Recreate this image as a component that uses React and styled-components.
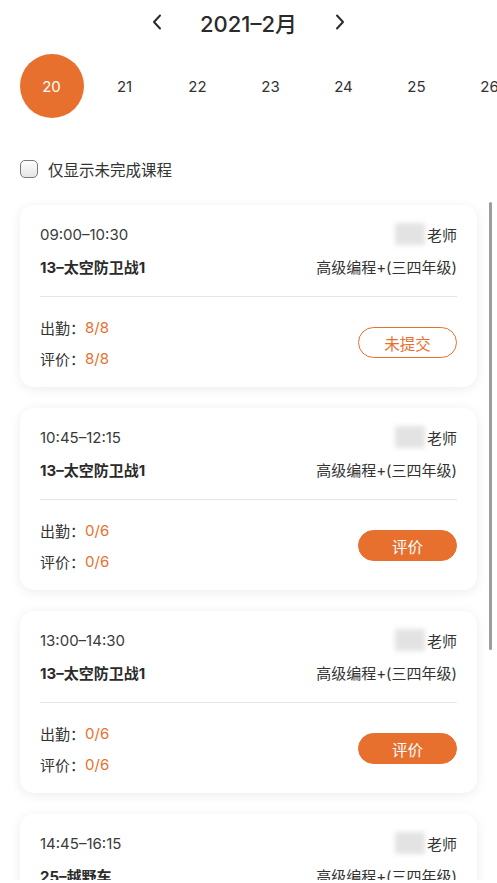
import styled, { createGlobalStyle } from 'styled-components';

const ORANGE = '#e8702f';

const GlobalStyle = createGlobalStyle`
  html, body {
    margin: 0;
    padding: 0;
    background: #ffffff;
    overflow: hidden;
  }
  * {
    box-sizing: border-box;
  }
  body {
    font-family: Inter, 'Noto Sans CJK SC', sans-serif;
    color: #333333;
  }
`;

const Page = styled.div`
  width: 497px;
  height: 883px;
  display: flex;
  flex-direction: column;
  overflow: hidden;
  background: #ffffff;
`;

const MonthBar = styled.div`
  height: 44px;
  display: flex;
  align-items: center;
  justify-content: center;
  gap: 36px;
`;

const Arrow = styled.button`
  border: none;
  background: none;
  padding: 0;
  width: 14px;
  height: 22px;
  display: flex;
  align-items: center;
  justify-content: center;
  cursor: pointer;
`;

const MonthTitle = styled.div`
  font-size: 22px;
  font-weight: 500;
  color: #2b2b2b;
`;

const DateRow = styled.div`
  display: flex;
  padding-left: 15px;
  margin-top: 10px;
  height: 64px;
  overflow: hidden;
`;

const DateItem = styled.div`
  flex: 0 0 73px;
  display: flex;
  align-items: center;
  justify-content: center;
`;

const DateNum = styled.div`
  width: 64px;
  height: 64px;
  border-radius: 50%;
  display: flex;
  align-items: center;
  justify-content: center;
  font-size: 15px;
  color: ${(p) => (p.$active ? '#ffffff' : '#333333')};
  background: ${(p) => (p.$active ? ORANGE : 'transparent')};
`;

const FilterRow = styled.label`
  display: flex;
  align-items: center;
  gap: 10px;
  margin: 39px 0 0 20px;
  height: 24px;
  font-size: 15.5px;
  color: #333333;
`;

const CheckBox = styled.span`
  width: 18px;
  height: 18px;
  border: 1.5px solid #7a7a7a;
  border-radius: 5px;
  background: linear-gradient(#ffffff, #e4e4e4);
`;

const ListWrap = styled.div`
  position: relative;
  height: 699px;
  overflow: hidden;
`;

const List = styled.div`
  display: flex;
  flex-direction: column;
  gap: 21px;
  padding: 24px 20px 20px 20px;
`;

const ScrollThumb = styled.div`
  position: absolute;
  right: 5px;
  top: 21px;
  width: 3px;
  height: 448px;
  border-radius: 2px;
  background: #9c9c9c;
`;

const Card = styled.div`
  background: #ffffff;
  border-radius: 14px;
  box-shadow: 0 2px 12px rgba(0, 0, 0, 0.08);
  padding: 18px 20px 18px 20px;
`;

const Row = styled.div`
  display: flex;
  align-items: center;
  justify-content: space-between;
  height: 22px;
  font-size: 15px;
  margin-top: ${(p) => p.$gap || 0}px;
`;

const Time = styled.span`
  color: #3a3a3a;
`;

const Title = styled.span`
  font-weight: 700;
  color: #2b2b2b;
`;

const Teacher = styled.span`
  display: flex;
  align-items: center;
  color: #333333;
`;

const BlurName = styled.span`
  display: inline-block;
  width: 30px;
  height: 22px;
  margin-right: 2px;
  background: #e3e3e3;
  filter: blur(2.5px);
`;

const Course = styled.span`
  color: #333333;
`;

const Divider = styled.div`
  height: 1px;
  background: #e6e6e6;
  margin: 19px 0 19px;
`;

const Bottom = styled.div`
  display: flex;
  align-items: center;
  justify-content: space-between;
`;

const Stats = styled.div`
  display: flex;
  flex-direction: column;
  gap: 9px;
`;

const Stat = styled.div`
  height: 22px;
  display: flex;
  align-items: center;
  font-size: 15px;
  color: #333333;
`;

const StatValue = styled.span`
  color: ${ORANGE};
`;

const ActionButton = styled.button`
  width: 99px;
  height: 31px;
  border-radius: 16px;
  font-family: inherit;
  font-size: 15.5px;
  border: 1px solid ${ORANGE};
  color: ${(p) => (p.$outline ? ORANGE : '#ffffff')};
  background: ${(p) => (p.$outline ? '#ffffff' : ORANGE)};
  padding: 0;
  cursor: pointer;
`;

const dates = [20, 21, 22, 23, 24, 25, 26];

const lessons = [
  { time: '09:00–10:30', title: '13–太空防卫战1', attend: '8/8', review: '8/8', done: true },
  { time: '10:45–12:15', title: '13–太空防卫战1', attend: '0/6', review: '0/6' },
  { time: '13:00–14:30', title: '13–太空防卫战1', attend: '0/6', review: '0/6' },
  { time: '14:45–16:15', title: '25–越野车', attend: '0/6', review: '0/6' },
];

function Chevron({ dir }) {
  return (
    <svg width='10' height='16' viewBox='0 0 10 16'>
      <path
        d={dir === 'left' ? 'M8 1.5 L2 8 L8 14.5' : 'M2 1.5 L8 8 L2 14.5'}
        fill='none'
        stroke='#2b2b2b'
        strokeWidth='2'
        strokeLinecap='round'
        strokeLinejoin='round'
      />
    </svg>
  );
}

export default function App() {
  return (
    <Page>
      <GlobalStyle />
      <MonthBar>
        <Arrow>
          <Chevron dir='left' />
        </Arrow>
        <MonthTitle>2021–2月</MonthTitle>
        <Arrow>
          <Chevron dir='right' />
        </Arrow>
      </MonthBar>

      <DateRow>
        {dates.map((d) => (
          <DateItem key={d}>
            <DateNum $active={d === 20}>{d}</DateNum>
          </DateItem>
        ))}
      </DateRow>

      <FilterRow>
        <CheckBox />
        仅显示未完成课程
      </FilterRow>

      <ListWrap>
        <List>
          {lessons.map((l) => (
            <Card key={l.time}>
              <Row>
                <Time>{l.time}</Time>
                <Teacher>
                  <BlurName />
                  老师
                </Teacher>
              </Row>
              <Row $gap={10}>
                <Title>{l.title}</Title>
                <Course>高级编程+(三四年级)</Course>
              </Row>
              <Divider />
              <Bottom>
                <Stats>
                  <Stat>
                    出勤：<StatValue>{l.attend}</StatValue>
                  </Stat>
                  <Stat>
                    评价：<StatValue>{l.review}</StatValue>
                  </Stat>
                </Stats>
                <ActionButton $outline={l.done}>
                  {l.done ? '未提交' : '评价'}
                </ActionButton>
              </Bottom>
            </Card>
          ))}
        </List>
        <ScrollThumb />
      </ListWrap>
    </Page>
  );
}
